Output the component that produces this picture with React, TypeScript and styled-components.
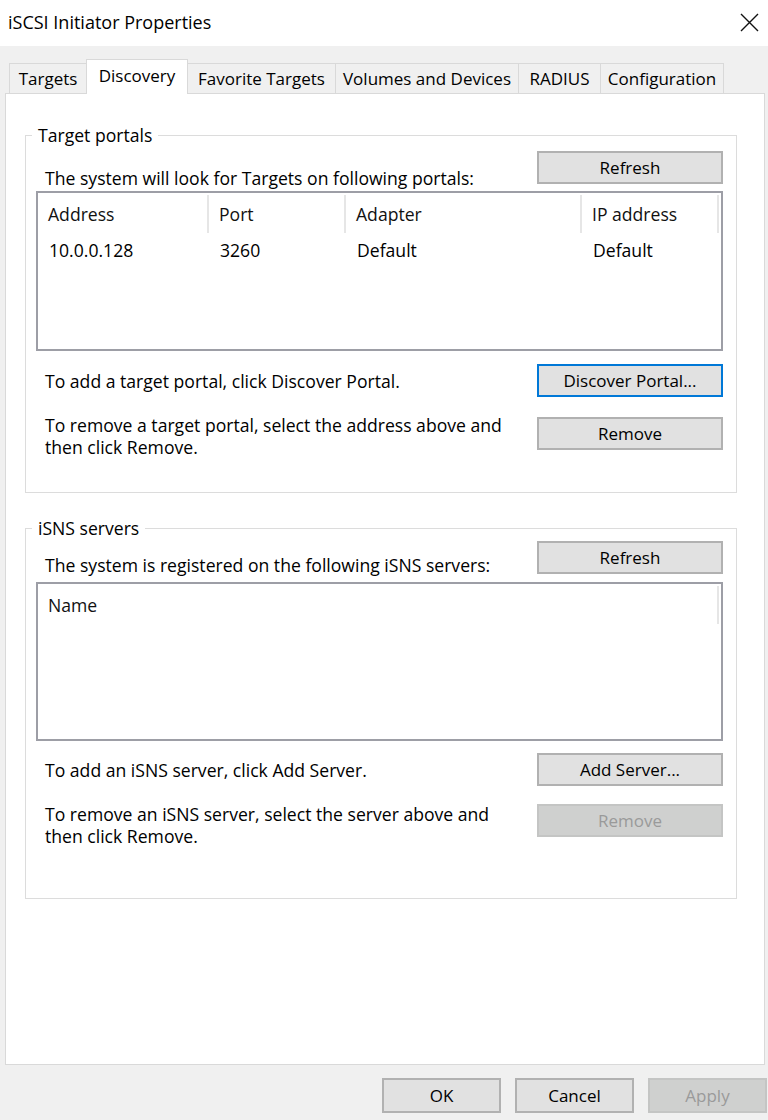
import styled, { createGlobalStyle } from 'styled-components';

const GlobalStyle = createGlobalStyle`
  html, body {
    margin: 0;
    padding: 0;
    background: #f0f0f0;
  }

  body {
    color: #000;
    font-family: "Open Sans", "Noto Sans", sans-serif;
    font-size: 17.6px;
  }

  * {
    box-sizing: border-box;
  }
`;

const tabs = [
  { label: 'Targets', width: 78 },
  { label: 'Discovery', width: 102, active: true },
  { label: 'Favorite Targets', width: 149 },
  { label: 'Volumes and Devices', width: 184 },
  { label: 'RADIUS', width: 83 },
  { label: 'Configuration', width: 124 },
];

const portalColumns = [
  { label: 'Address', width: 171 },
  { label: 'Port', width: 137 },
  { label: 'Adapter', width: 236 },
  { label: 'IP address', width: 137 },
];

const portals = [['10.0.0.128', '3260', 'Default', 'Default']];

const serverColumns = [{ label: 'Name', width: 681 }];

type Column = { label: string; width: number };

function ListView({ columns, rows, height }: { columns: Column[]; rows: string[][]; height: number }) {
  const template = columns.map((c) => `${c.width}px`).join(' ');
  return (
    <ListBox $height={height}>
      <ListGrid $template={template}>
        {columns.map((c) => (
          <HeaderCell key={c.label}>{c.label}</HeaderCell>
        ))}
        {rows.map((row) => row.map((cell, i) => <Cell key={`${row[0]}-${i}`}>{cell}</Cell>))}
      </ListGrid>
    </ListBox>
  );
}

function App() {
  return (
    <Window>
      <GlobalStyle />
      {/* Title bar */}
      <TitleBar>
        <Title>iSCSI Initiator Properties</Title>
        <CloseButton>
          <svg width="19" height="19" viewBox="0 0 19 19">
            <path d="M1 1 L18 18 M18 1 L1 18" stroke="#111" strokeWidth="1.4" fill="none" />
          </svg>
        </CloseButton>
      </TitleBar>

      <Body>
        {/* Tabs */}
        <TabStrip>
          {tabs.map((t) => (
            <Tab key={t.label} $width={t.width} $active={!!t.active}>
              {t.label}
            </Tab>
          ))}
        </TabStrip>

        <TabPanel>
          {/* Target portals */}
          <GroupBox $top={30} $bottom={34}>
            <Legend>Target portals</Legend>
            <HeaderRow $top={5}>
              <RowText $offset={16}>The system will look for Targets on following portals:</RowText>
              <Button>Refresh</Button>
            </HeaderRow>
            <ListGap $top={2}>
              <ListView columns={portalColumns} rows={portals} height={160} />
            </ListGap>
            <ActionRow $top={13}>
              <RowText>To add a target portal, click Discover Portal.</RowText>
              <Button $focused>Discover Portal...</Button>
            </ActionRow>
            <ActionRow $top={20} $align="flex-start">
              <RowText $offset={-3}>
                To remove a target portal, select the address above and
                <br />
                then click Remove.
              </RowText>
              <Button>Remove</Button>
            </ActionRow>
          </GroupBox>

          {/* iSNS servers */}
          <GroupBox $top={24} $bottom={51}>
            <Legend>iSNS servers</Legend>
            <HeaderRow $top={2}>
              <RowText $offset={13}>The system is registered on the following iSNS servers:</RowText>
              <Button>Refresh</Button>
            </HeaderRow>
            <ListGap $top={6}>
              <ListView columns={serverColumns} rows={[]} height={159} />
            </ListGap>
            <ActionRow $top={12}>
              <RowText>To add an iSNS server, click Add Server.</RowText>
              <Button>Add Server...</Button>
            </ActionRow>
            <ActionRow $top={18} $align="flex-start">
              <RowText $offset={-1}>
                To remove an iSNS server, select the server above and
                <br />
                then click Remove.
              </RowText>
              <Button disabled>Remove</Button>
            </ActionRow>
          </GroupBox>
        </TabPanel>

        {/* Dialog buttons */}
        <Footer>
          <DialogButton>OK</DialogButton>
          <DialogButton>Cancel</DialogButton>
          <DialogButton disabled>Apply</DialogButton>
        </Footer>
      </Body>
    </Window>
  );
}

const Window = styled.div`
  width: 768px;
  height: 1120px;
  overflow: hidden;
  background: #f0f0f0;
`;

/* Title bar */

const TitleBar = styled.div`
  display: flex;
  align-items: center;
  justify-content: space-between;
  height: 46px;
  padding: 0 5px 2px 8px;
  background: #fff;
`;

const Title = styled.div`
  font-size: 18px;
`;

const CloseButton = styled.div`
  display: flex;
  align-items: center;
  justify-content: center;
  width: 28px;
  height: 28px;
`;

/* Body */

const Body = styled.div`
  padding-top: 13px;
`;

const TabStrip = styled.div`
  display: flex;
  align-items: flex-end;
  height: 34px;
  padding-left: 9px;
`;

const Tab = styled.div<{ $width: number; $active: boolean }>`
  position: relative;
  z-index: ${({ $active }) => ($active ? 1 : 0)};
  display: flex;
  align-items: center;
  justify-content: center;
  width: ${({ $width }) => $width}px;
  height: ${({ $active }) => ($active ? 35 : 30)}px;
  margin-right: -1px;
  margin-bottom: ${({ $active }) => ($active ? -1 : 0)}px;
  padding-bottom: ${({ $active }) => ($active ? 3 : 0)}px;
  font-size: 17px;
  white-space: nowrap;
  background: ${({ $active }) => ($active ? '#fff' : '#f0f0f0')};
  border: 1px solid #d9d9d9;
  border-bottom: none;
`;

const TabPanel = styled.div`
  display: flex;
  flex-direction: column;
  width: 760px;
  height: 972px;
  margin-left: 5px;
  padding: 0 27px 0 19px;
  background: #fff;
  border: 1px solid #d9d9d9;
`;

/* Group box */

const GroupBox = styled.fieldset<{ $top: number; $bottom: number }>`
  min-width: 0;
  margin: ${({ $top }) => $top}px 0 0;
  padding: 0 13px ${({ $bottom }) => $bottom}px 10px;
  border: 1px solid #dcdcdc;
`;

const Legend = styled.legend`
  margin-left: -4px;
  padding: 0 6px;
  line-height: 22px;
`;

const HeaderRow = styled.div<{ $top: number }>`
  display: flex;
  align-items: flex-start;
  justify-content: space-between;
  margin-top: ${({ $top }) => $top}px;
`;

const ActionRow = styled.div<{ $top: number; $align?: string }>`
  display: flex;
  align-items: ${({ $align }) => $align || 'center'};
  justify-content: space-between;
  margin-top: ${({ $top }) => $top}px;
`;

const RowText = styled.div<{ $offset?: number }>`
  margin-top: ${({ $offset }) => $offset || 0}px;
  padding-left: 9px;
  line-height: 22px;
  white-space: nowrap;
`;

const ListGap = styled.div<{ $top: number }>`
  margin-top: ${({ $top }) => $top}px;
`;

/* List view */

const ListBox = styled.div<{ $height: number }>`
  width: 687px;
  height: ${({ $height }) => $height}px;
  background: #fff;
  border: 2px solid #9d9ea6;
`;

const ListGrid = styled.div<{ $template: string }>`
  display: grid;
  grid-template-columns: ${({ $template }) => $template};
`;

const HeaderCell = styled.div`
  display: flex;
  align-items: center;
  height: 38px;
  margin-top: 2px;
  padding-left: 10px;
  color: #111;
  border-right: 2px solid #e6e6e6;
`;

const Cell = styled.div`
  display: flex;
  align-items: center;
  height: 34px;
  padding-left: 11px;
`;

/* Buttons */

const Button = styled.button<{ $focused?: boolean }>`
  flex-shrink: 0;
  width: 186px;
  height: 33px;
  padding: 0;
  color: #000;
  font-family: inherit;
  font-size: 17px;
  background: #e1e1e1;
  border: 2px solid ${({ $focused }) => ($focused ? '#0078d7' : '#b1b1b1')};

  &:disabled {
    color: #9a9a9a;
    background: #cfd0cf;
    border-color: #c4c5c4;
  }
`;

const Footer = styled.div`
  display: flex;
  justify-content: flex-end;
  gap: 14px;
  margin-top: 13px;
  padding-right: 1px;
`;

const DialogButton = styled(Button)`
  width: 119px;
  height: 35px;
`;

export default App;
